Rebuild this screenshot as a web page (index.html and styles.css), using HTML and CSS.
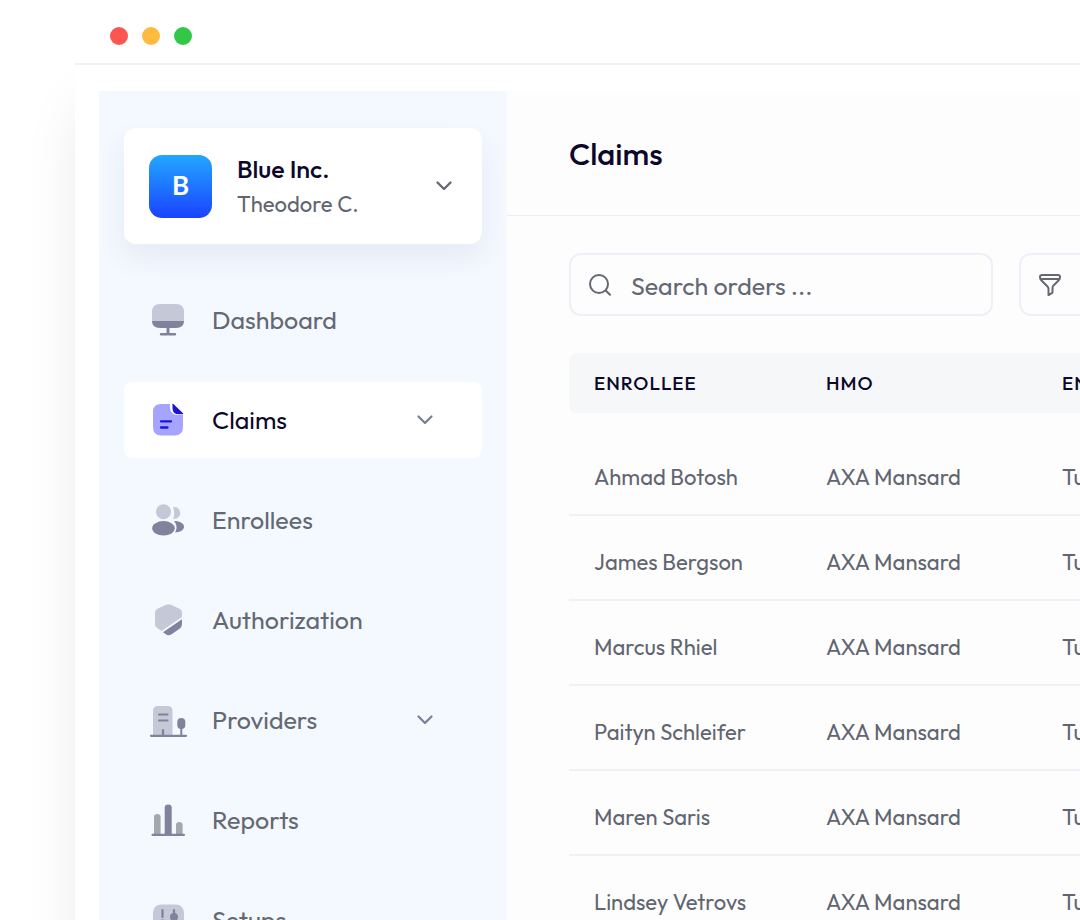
FILE: index.html
```html
<!DOCTYPE html>
<html lang="en">
<head>
<meta charset="utf-8">
<title>Claims</title>
<link rel="stylesheet" href="styles.css">
</head>
<body>
<div class="window">
  <div class="titlebar">
    <span class="dot dot-red"></span>
    <span class="dot dot-amber"></span>
    <span class="dot dot-green"></span>
  </div>
  <div class="app">
    <aside class="sidebar">
      <button class="account" type="button">
        <span class="account-logo">B</span>
        <span class="account-text">
          <span class="account-name">Blue Inc.</span>
          <span class="account-user">Theodore C.</span>
        </span>
        <svg class="chevron chevron-dark" viewBox="0 0 18 12"><path d="M2.500 2.500l6.500 6.500 6.500-6.500"/></svg>
      </button>
      <nav class="nav">
        <a class="nav-item" href="#">
          <svg class="nav-icon" viewBox="0 0 40 40">
            <path class="soft" d="M4 21V12q0-8 8-8h16q8 0 8 8v9z"/>
            <path class="solid" d="M4 21h32q0 7-8 7h-6.500v5h5.500a1.200 1.200 0 0 1 0 2.400H13a1.200 1.200 0 0 1 0-2.400h5.500v-5H12q-8 0-8-7z"/>
          </svg>
          <span class="nav-label">Dashboard</span>
        </a>
        <a class="nav-item nav-active" href="#" aria-current="page">
          <svg class="nav-icon" viewBox="0 0 40 40">
            <path class="file" d="M13 4h9v3q0 8 8 8h5v12q0 8.500-8.500 8.500H13q-8 0-8-8.500V12q0-8 8-8z"/>
            <path class="fold" d="M24.500 4.300q0-.9.900-.3L35 13.200q.7 1.100-.5 1.100h-3.500q-6.500 0-6.500-6.300z"/>
            <path class="file-lines" d="M13 21.300h10M13 27.500h6.500"/>
          </svg>
          <span class="nav-label">Claims</span>
          <svg class="chevron" viewBox="0 0 18 12"><path d="M2.500 2.500l6.500 6.500 6.500-6.500"/></svg>
        </a>
        <a class="nav-item" href="#">
          <svg class="nav-icon" viewBox="0 0 40 40">
            <circle class="soft" cx="15.500" cy="11.700" r="7.500"/>
            <path class="soft" d="M25 7.300a5.800 5.800 0 1 1 0 11.200q2.500-5.500 0-11.200z"/>
            <ellipse class="solid" cx="15.500" cy="28.300" rx="11.300" ry="7.300"/>
            <path class="solid" d="M26 21c6 0 10 2.500 10 5.800s-4 5.500-9 5.600c2.500-4 1.800-8-1-11.400z"/>
          </svg>
          <span class="nav-label">Enrollees</span>
        </a>
        <a class="nav-item" href="#">
          <svg class="nav-icon" viewBox="0 0 40 40">
            <path class="soft" d="M17.500 5q3-1.400 6 0l8 3.700q2.500 1.200 2.500 4V17L13.500 31 8.500 27.500Q7 26.500 7 24V12.700q0-2.800 2.500-4z"/>
            <path class="solid" d="M34 19.300V24q0 3-2.500 4.700L24 34q-3.500 2.500-6.500 0l-2.500-1.800z"/>
          </svg>
          <span class="nav-label">Authorization</span>
        </a>
        <a class="nav-item" href="#">
          <svg class="nav-icon" viewBox="0 0 40 40">
            <path class="soft" d="M5 35V11q0-5 5-5h9.500q5 0 5 5v24z"/>
            <path class="solid" d="M29.300 24v-2a4 4 0 0 1 8 0v3q0 3.500-3 4v6.500h-2V29q-3-.5-3-4z"/>
            <path class="solid-line" d="M3 35.800h35M11 14.500h8.500M11 20.500h8.500M15 35.500v-5.500"/>
          </svg>
          <span class="nav-label">Providers</span>
          <svg class="chevron" viewBox="0 0 18 12"><path d="M2.500 2.500l6.500 6.500 6.500-6.500"/></svg>
        </a>
        <a class="nav-item" href="#">
          <svg class="nav-icon" viewBox="0 0 40 40">
            <path class="bar" d="M6 35V17q0-3 3.300-3t3.300 3v18zM28 35V25q0-3 3.300-3t3.300 3v10z"/>
            <path class="solid" d="M16.700 35V7.500q0-3 3.500-3t3.500 3V35z"/>
            <path class="solid-line" d="M4.500 34.800h31.500"/>
          </svg>
          <span class="nav-label">Reports</span>
        </a>
        <a class="nav-item" href="#">
          <svg class="nav-icon" viewBox="0 0 40 40">
            <rect class="soft" x="5" y="4.500" width="31" height="31" rx="8"/>
            <path class="solid-line" d="M14.500 10v7M26 10v20M14.500 25v6"/>
            <circle class="solid" cx="26" cy="17" r="4"/>
            <circle class="solid" cx="14.500" cy="23.500" r="4"/>
          </svg>
          <span class="nav-label">Setups</span>
        </a>
      </nav>
    </aside>
    <main class="main">
      <header class="page-head"><h1 class="page-title">Claims</h1></header>
      <div class="content">
        <div class="toolbar">
          <label class="search">
            <svg class="tool-icon" viewBox="0 0 24 24"><circle cx="11" cy="11" r="9"/><path d="M17.700 17.500l4.300 4.300"/></svg>
            <input class="search-input" type="search" placeholder="Search orders ..." aria-label="Search orders">
          </label>
          <button class="filter" type="button" aria-label="Filter">
            <svg class="tool-icon" viewBox="0 0 24 24"><path d="M4 2h16q2 0 2 2v.5Q22 6 20.500 7.500L15.500 12.500Q14.500 13.500 14.500 15v4q0 1-1 1.400l-3 1.600v-6q0-1.500-1-2.500L3.500 7.500Q2 6 2 4.500V4q0-2 2-2zM2.500 6h19"/></svg>
          </button>
        </div>
        <table class="claims">
          <thead>
            <tr><th>ENROLLEE</th><th>HMO</th><th>ENROLLEE TYPE</th></tr>
          </thead>
          <tbody>
            <tr><td>Ahmad Botosh</td><td>AXA Mansard</td><td>Tunde</td></tr>
            <tr><td>James Bergson</td><td>AXA Mansard</td><td>Tunde</td></tr>
            <tr><td>Marcus Rhiel</td><td>AXA Mansard</td><td>Tunde</td></tr>
            <tr><td>Paityn Schleifer</td><td>AXA Mansard</td><td>Tunde</td></tr>
            <tr><td>Maren Saris</td><td>AXA Mansard</td><td>Tunde</td></tr>
            <tr><td>Lindsey Vetrovs</td><td>AXA Mansard</td><td>Tunde</td></tr>
          </tbody>
        </table>
      </div>
    </main>
  </div>
</div>
</body>
</html>
```
FILE: styles.css
```css
* { box-sizing: border-box; }

body {
  margin: 0;
  height: 100vh;
  overflow: hidden;
  padding: 8px 0 0 75px;
  background: #fff;
  color: #61656f;
  font-family: Outfit, Lato, sans-serif;
}

button, input { font: inherit; color: inherit; }

.window {
  min-height: 100%;
  background: #fff;
  box-shadow: 0 88px 60px -14px rgba(0, 0, 0, 0.12);
}

.titlebar {
  display: flex;
  align-items: center;
  gap: 14px;
  height: 57px;
  padding-left: 35px;
  border-bottom: 2px solid #edf1f8;
}

.dot { width: 18px; height: 18px; border-radius: 50%; }
.dot-red { background: #fd5550; }
.dot-amber { background: #febb40; }
.dot-green { background: #33c748; }

.app { display: flex; padding: 26px 0 0 24px; }

.sidebar {
  flex: 0 0 408px;
  padding: 37px 25px;
  background: #f4f8ff;
}

.account {
  display: flex;
  align-items: center;
  width: 100%;
  height: 116px;
  padding: 0 29px 0 25px;
  border: 0;
  border-radius: 12px;
  background: #fff;
  box-shadow: 0 14px 28px rgba(60, 75, 110, 0.08);
  text-align: left;
}

.account-logo {
  display: grid;
  place-items: center;
  width: 63px;
  height: 63px;
  margin-right: 25px;
  padding-bottom: 2px;
  border-radius: 13px;
  background: linear-gradient(#22a7ff, #1a43ff);
  color: #fff;
  font-family: Lato, sans-serif;
  font-size: 26px;
  font-weight: 700;
}

.account-text { display: grid; flex: 1; }
.account-name { color: #0b0829; font-size: 25px; font-weight: 500; line-height: 36px; }
.account-user { font-size: 22px; line-height: 34px; }

.chevron {
  width: 18px;
  height: 12px;
  fill: none;
  stroke: #7c8099;
  stroke-width: 2.3;
  stroke-linecap: round;
  stroke-linejoin: round;
}
.chevron-dark { stroke: #646875; }

.nav { display: grid; gap: 24px; margin-top: 38px; }

.nav-item {
  display: flex;
  align-items: center;
  gap: 24px;
  height: 76px;
  padding: 0 48px 0 24px;
  border-radius: 8px;
  color: #646872;
  font-size: 25px;
  text-decoration: none;
}
.nav-active { background: #fff; color: #0b0829; }
.nav-label { flex: 1; }

.nav-icon { width: 40px; height: 40px; }
.soft { fill: #c4c8d7; }
.solid { fill: #7f839b; }
.solid-line { fill: none; stroke: #7f839b; stroke-width: 2.2; stroke-linecap: round; }
.bar { fill: #a3a7b0; }
.file { fill: #a5a4ff; }
.fold { fill: #1c12e0; }
.file-lines { stroke: #1c12e0; stroke-width: 2.3; stroke-linecap: round; }

.main { flex: 1; min-width: 0; overflow: hidden; background: #fdfdfe; }

.page-head {
  display: flex;
  align-items: center;
  height: 125px;
  padding-left: 62px;
  border-bottom: 1px solid #eceef3;
}
.page-title { margin: 0; color: #0b0829; font-size: 31px; font-weight: 500; }

.content { padding: 37px 0 0 62px; }

.toolbar { display: flex; gap: 26px; margin-bottom: 37px; }

.search {
  display: flex;
  flex: 0 0 424px;
  align-items: center;
  gap: 19px;
  min-width: 0;
  height: 63px;
  padding: 0 17px;
  border: 2px solid #f0eff7;
  border-radius: 12px;
}
.search-input {
  flex: 1;
  min-width: 0;
  padding: 2px 0 0;
  border: 0;
  outline: 0;
  background: none;
  font-size: 25px;
}
.search-input::placeholder { color: #646872; opacity: 1; }

.filter {
  display: flex;
  flex: 0 0 150px;
  align-items: center;
  height: 63px;
  padding: 0 17px;
  border: 2px solid #f0eff7;
  border-radius: 12px;
  background: none;
}

.tool-icon {
  flex: none;
  width: 24px;
  height: 24px;
  fill: none;
  stroke: #646872;
  stroke-width: 2;
  stroke-linecap: round;
  stroke-linejoin: round;
}

.claims { width: 800px; table-layout: fixed; border-spacing: 0; }
.claims th {
  width: 236px;
  height: 60px;
  padding: 0;
  background: #f6f7f9;
  color: #0b0829;
  font-size: 19px;
  font-weight: 500;
  letter-spacing: 1px;
  text-align: left;
}
.claims th:first-child { width: 257px; padding-left: 25px; border-radius: 8px 0 0 8px; }
.claims th:last-child { width: auto; }
.claims tbody::before { content: ""; display: block; height: 18px; }
.claims td {
  height: 85px;
  padding: 9px 0 0;
  border-bottom: 2px solid #f0f1f6;
  font-size: 22px;
}
.claims td:first-child { padding-left: 25px; }
```
